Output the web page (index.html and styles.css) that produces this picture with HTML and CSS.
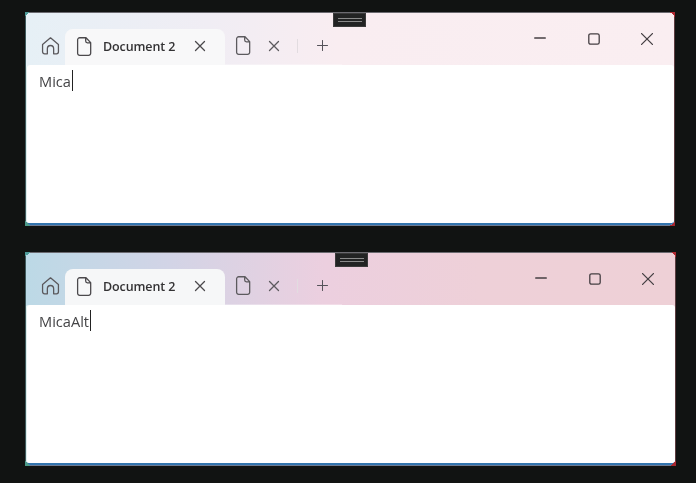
FILE: index.html
```html
<!DOCTYPE html>
<html lang="en">
<head>
<meta charset="utf-8">
<title>Mica and MicaAlt</title>
<link rel="stylesheet" href="styles.css">
</head>
<body>
<main class="stage">
  <section class="window window-mica">
    <div class="handle"><span class="handle-bar"></span></div>
    <div class="corner corner-tl"></div><div class="corner corner-tr"></div><div class="corner corner-bl"></div><div class="corner corner-br"></div>
    <header class="titlebar">
      <div class="home"><svg class="icon" viewBox="0 0 18 18"><path d="M2.2 8.2 9 2.4l6.8 5.8v6.2a1.7 1.7 0 0 1-1.7 1.7h-2.4v-4.4a2.7 2.7 0 0 0-5.4 0v4.4H3.900a1.7 1.7 0 0 1-1.7-1.7z"/></svg></div>
      <div class="tab">
        <svg class="icon doc" viewBox="0 0 18 18"><path d="M4.9 1.5h5.400l4 4.200v9.100a1.800 1.800 0 0 1-1.800 1.800H4.900a1.800 1.800 0 0 1-1.800-1.800V3.300a1.800 1.800 0 0 1 1.800-1.800zM10 1.700v2.600a1.500 1.500 0 0 0 1.500 1.500h2.700"/></svg>
        <span class="tab-title">Document 2</span>
        <svg class="icon x" viewBox="0 0 12 12"><path d="M1.500 1.500l9 9M10.500 1.500l-9 9"/></svg>
      </div>
      <div class="tabstrip">
        <div class="tab-idle">
          <svg class="icon doc" viewBox="0 0 18 18"><path d="M4.9 1.5h5.400l4 4.200v9.100a1.800 1.800 0 0 1-1.800 1.800H4.900a1.800 1.800 0 0 1-1.800-1.800V3.300a1.800 1.800 0 0 1 1.800-1.800zM10 1.700v2.600a1.500 1.500 0 0 0 1.500 1.500h2.700"/></svg>
          <svg class="icon x" viewBox="0 0 12 12"><path d="M1.500 1.500l9 9M10.500 1.500l-9 9"/></svg>
        </div>
        <span class="divider"></span>
        <svg class="icon plus" viewBox="0 0 12 12"><path d="M6 .5v11M.5 6h11"/></svg>
      </div>
      <div class="caption">
        <div class="cap"><svg class="cap-icon cap-min" viewBox="0 0 12 12"><path d="M.8 6h10.400"/></svg></div>
        <div class="cap"><svg class="cap-icon" viewBox="0 0 12 12"><rect x=".8" y=".8" width="10.400" height="10.400" rx="1.800"/></svg></div>
        <div class="cap"><svg class="cap-icon" viewBox="0 0 12 12"><path d="M.6.6l10.800 10.800M11.400.6.6 11.400"/></svg></div>
      </div>
    </header>
    <div class="editor"><span class="text">Mica</span><span class="cursor"></span></div>
  </section>

  <section class="window window-alt">
    <div class="handle"><span class="handle-bar"></span></div>
    <div class="corner corner-tl"></div><div class="corner corner-tr"></div><div class="corner corner-bl"></div><div class="corner corner-br"></div>
    <header class="titlebar">
      <div class="home"><svg class="icon" viewBox="0 0 18 18"><path d="M2.2 8.2 9 2.4l6.8 5.8v6.2a1.7 1.7 0 0 1-1.7 1.7h-2.4v-4.4a2.7 2.7 0 0 0-5.4 0v4.4H3.900a1.7 1.7 0 0 1-1.7-1.7z"/></svg></div>
      <div class="tab">
        <svg class="icon doc" viewBox="0 0 18 18"><path d="M4.9 1.5h5.400l4 4.200v9.100a1.800 1.800 0 0 1-1.800 1.800H4.900a1.800 1.800 0 0 1-1.800-1.800V3.300a1.800 1.800 0 0 1 1.800-1.800zM10 1.700v2.600a1.500 1.500 0 0 0 1.500 1.500h2.700"/></svg>
        <span class="tab-title">Document 2</span>
        <svg class="icon x" viewBox="0 0 12 12"><path d="M1.500 1.500l9 9M10.500 1.500l-9 9"/></svg>
      </div>
      <div class="tabstrip">
        <div class="tab-idle">
          <svg class="icon doc" viewBox="0 0 18 18"><path d="M4.9 1.5h5.400l4 4.200v9.100a1.800 1.800 0 0 1-1.800 1.800H4.900a1.800 1.800 0 0 1-1.800-1.800V3.300a1.800 1.800 0 0 1 1.800-1.800zM10 1.700v2.600a1.500 1.500 0 0 0 1.500 1.500h2.700"/></svg>
          <svg class="icon x" viewBox="0 0 12 12"><path d="M1.500 1.500l9 9M10.500 1.500l-9 9"/></svg>
        </div>
        <span class="divider"></span>
        <svg class="icon plus" viewBox="0 0 12 12"><path d="M6 .5v11M.5 6h11"/></svg>
      </div>
      <div class="caption">
        <div class="cap"><svg class="cap-icon cap-min" viewBox="0 0 12 12"><path d="M.8 6h10.400"/></svg></div>
        <div class="cap"><svg class="cap-icon" viewBox="0 0 12 12"><rect x=".8" y=".8" width="10.400" height="10.400" rx="1.800"/></svg></div>
        <div class="cap"><svg class="cap-icon" viewBox="0 0 12 12"><path d="M.6.6l10.800 10.800M11.400.6.6 11.400"/></svg></div>
      </div>
    </header>
    <div class="editor"><span class="text">MicaAlt</span><span class="cursor"></span></div>
  </section>
</main>
</body>
</html>
```
FILE: styles.css
```css
* { box-sizing: border-box; }
html, body { margin: 0; height: 100%; overflow: hidden; }
body { background: #111312; font-family: "Open Sans", "Noto Sans", sans-serif; color: #3c3a3c; }

.stage { display: flex; flex-direction: column; gap: 26px; padding: 12px 20px 0 25px; filter: blur(.4px); }

.window {
  position: relative;
  height: 214px;
  display: flex;
  flex-direction: column;
  border: 1px solid #6a6468;
  border-left-color: #3f5a5c;
  border-right-color: #5c3c40;
  border-top-color: #6b6a70;
  border-bottom-color: #6d7a92;
}
.window-mica { width: 650px; background: linear-gradient(90deg, #e6f0f6 0%, #f0edf4 28%, #f9edf1 48%, #faeef1 100%); }
.window-alt { width: 651px; background: linear-gradient(90deg, #bcd9e6 0%, #d2d4e6 22%, #eccfdf 46%, #eed0d8 70%, #eed0d6 100%); }

.corner { position: absolute; width: 5px; height: 5px; z-index: 2; }
.corner-tl { left: -1px; top: -1px; background: linear-gradient(135deg, #4d9a98 50%, transparent 50%); }
.corner-tr { right: -1px; top: -1px; background: linear-gradient(225deg, #b02830 50%, transparent 50%); }
.corner-bl { left: -1px; bottom: -1px; background: linear-gradient(45deg, #4d9a88 50%, transparent 50%); }
.corner-br { right: -1px; bottom: -1px; background: linear-gradient(315deg, #a82830 50%, transparent 50%); }

.handle {
  position: absolute;
  left: 307px;
  top: 0;
  width: 33px;
  height: 14px;
  background: #222323;
  border: 1px solid #3a3a3a;
  display: flex;
  align-items: center;
  justify-content: center;
}
.window-alt .handle { left: 309px; }
.handle-bar { display: block; width: 24px; height: 4px; border-top: 1px solid #8a8a8a; border-bottom: 1px solid #8a8a8a; }

.titlebar { height: 52px; display: flex; align-items: flex-end; flex: none; }

.icon { fill: none; stroke: #4b494c; stroke-width: 1.1; stroke-linejoin: round; stroke-linecap: round; display: block; }
.home { width: 39px; height: 36px; display: flex; align-items: center; justify-content: center; padding: 0 0 4px 9px; }
.home .icon { width: 21px; height: 21px; stroke: #5a585c; }

.tab {
  width: 160px;
  height: 36px;
  background: #f8f8f9;
  border-radius: 8px 8px 0 0;
  display: flex;
  align-items: center;
  padding: 0 0 2px 9px;
}
.window-alt .tab { background: #f6f7f8; }
.doc { width: 21px; height: 21px; flex: none; }
.tab-title { margin-left: 8px; font-size: 12.5px; font-weight: 600; color: #333234; width: 74px; white-space: nowrap; letter-spacing: -.1px; }
.x { width: 12px; height: 12px; stroke: #4b494c; stroke-width: 1.3; flex: none; }
.tab .x { margin-left: 17px; }

.tabstrip { width: 117px; height: 36px; display: flex; align-items: center; padding-bottom: 2px; border-bottom: 1px solid rgba(255, 255, 255, .3); }
.tab-idle { width: 72px; display: flex; align-items: center; padding-left: 8px; }
.tab-idle .doc { stroke: #5c5a5e; }
.tab-idle .x { margin-left: 14px; stroke: #5c5a5e; }

.divider { width: 1px; height: 14px; background: #e2dce0; }
.plus { width: 11px; height: 11px; margin-left: 19px; stroke: #55535a; stroke-width: 1.1; }

.caption { margin-left: auto; align-self: flex-start; display: flex; padding-top: 20px; }
.cap { width: 53.5px; height: 12px; display: flex; align-items: center; justify-content: center; }
.cap-icon { width: 12px; height: 12px; fill: none; stroke: #453f43; stroke-width: 1.3; stroke-linecap: round; }
.cap-min { margin-bottom: 2px; stroke-width: 1.7; }

.editor {
  flex: 1;
  background: #fff;
  border-radius: 3px 3px 4px 4px;
  border-bottom: 2px solid #3274ae;
  box-shadow: inset 1px 0 0 #dcecec;
  padding: 5px 0 0 13px;
  display: flex;
  align-items: flex-start;
  font-size: 14.6px;
  line-height: 22px;
  color: #444446;
}
.cursor { width: 1.4px; height: 21px; background: #222; margin-left: 1px; }
```
